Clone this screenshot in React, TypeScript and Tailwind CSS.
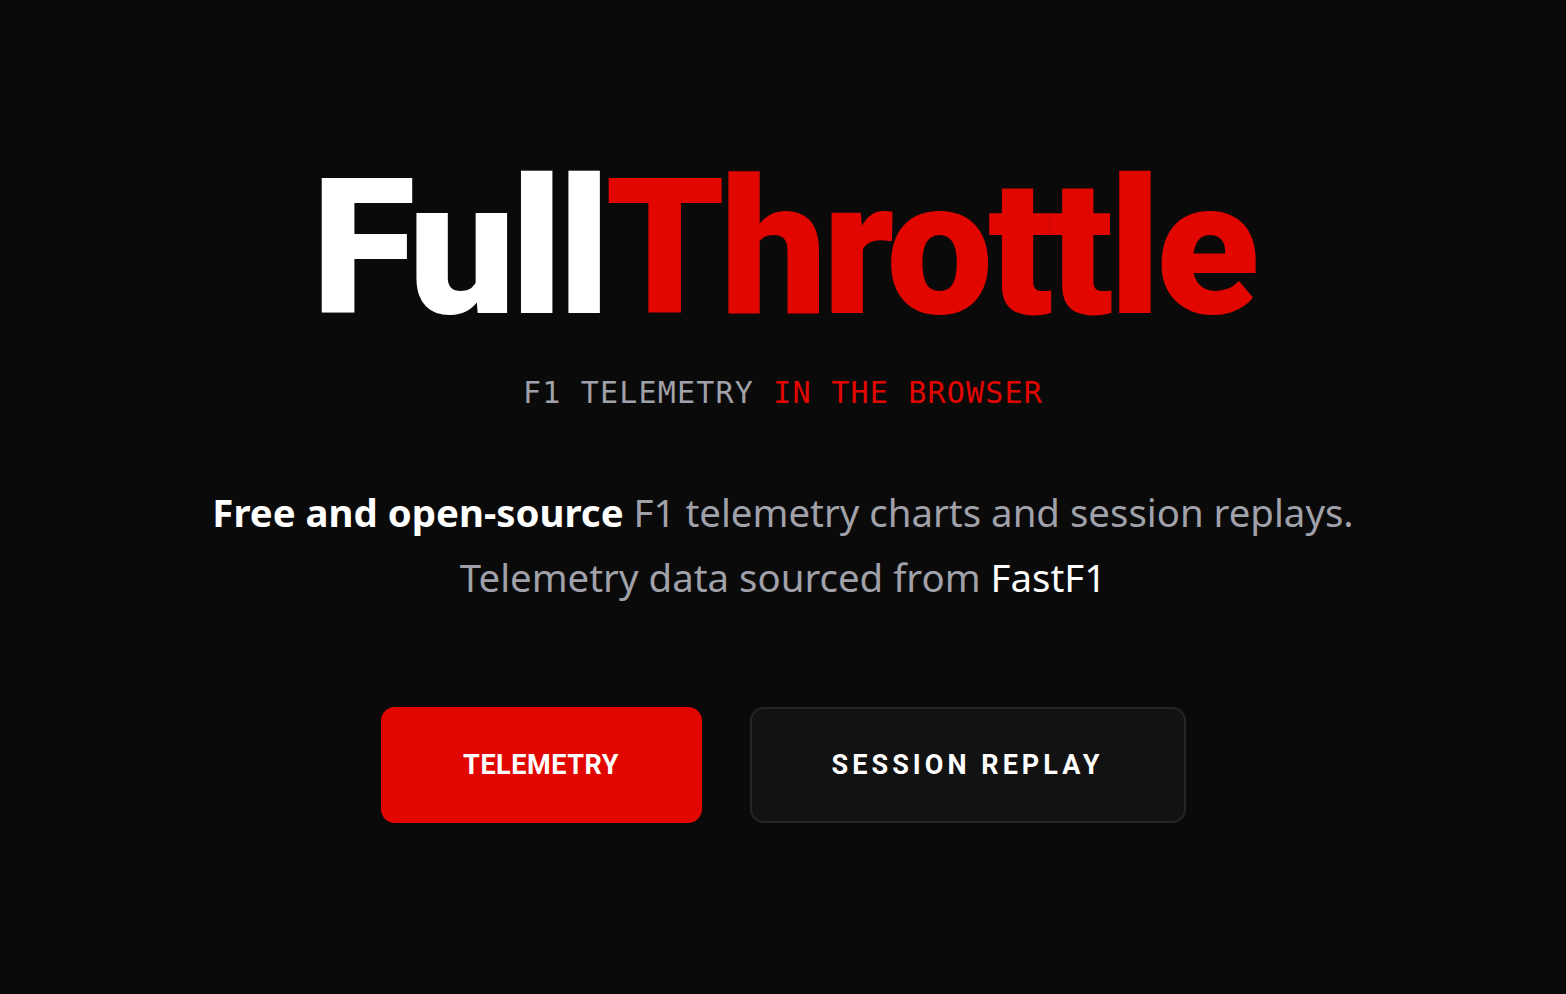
export default function App() {
  return (
    <div className="min-h-screen bg-[#0a0a0a] flex flex-col items-center justify-center pb-[18px] text-white">
      <h1 className="font-['Roboto',sans-serif] font-black text-[190px] leading-none tracking-[-0.026em]">
        <span className="text-white">Full</span>
        <span className="text-[#e10600]">Throttle</span>
      </h1>

      <p className="mt-[35px] font-['DejaVu_Sans_Mono',monospace] text-[30px] leading-none tracking-[0.04em] text-[#a1a1aa]">
        F1 TELEMETRY <span className="text-[#e10600]">IN THE BROWSER</span>
      </p>

      <div className="mt-[72px] text-center font-['Noto_Sans',sans-serif] text-[38.4px] leading-[65px] text-[#a1a1aa]">
        <p>
          <span className="font-bold text-white">Free and open-source</span> F1 telemetry charts and session replays.
        </p>
        <p>
          Telemetry data sourced from <span className="text-white">FastF1</span>
        </p>
      </div>

      <div className="mt-[97px] flex gap-12">
        <button className="w-[321px] h-[116px] rounded-[14px] bg-[#e10600] font-['Roboto',sans-serif] font-bold text-[27px] tracking-[0.02em] text-white">
          TELEMETRY
        </button>
        <button className="w-[436px] h-[116px] rounded-[14px] bg-[#121212] border-2 border-[#262626] font-['Roboto',sans-serif] font-bold text-[27px] tracking-[0.15em] text-white">
          SESSION REPLAY
        </button>
      </div>
    </div>
  );
}
